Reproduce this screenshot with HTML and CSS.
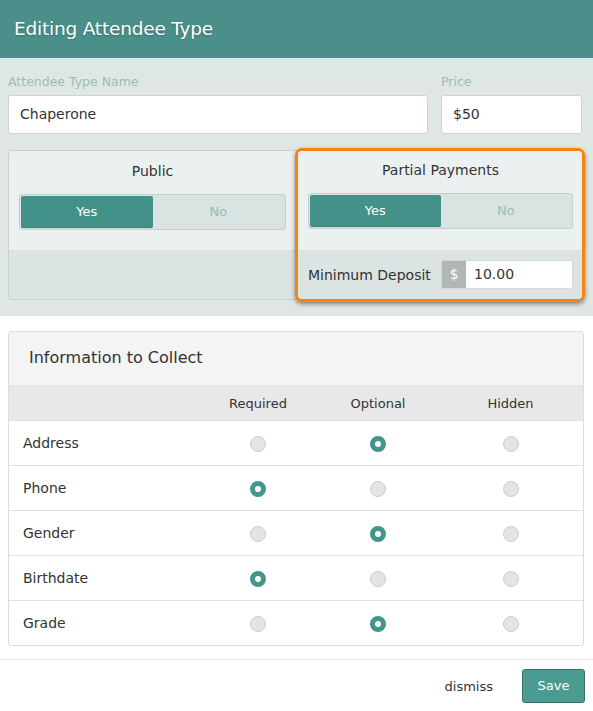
FILE: index.html
```html
<!DOCTYPE html>
<html>
<head>
<meta charset="utf-8">
<link rel="stylesheet" href="styles.css">
</head>
<body>
<div class="modal">
  <div class="header">Editing Attendee Type</div>
  <div class="top">
    <div class="fields">
      <div class="field name">
        <div class="label">Attendee Type Name</div>
        <div class="input">Chaperone</div>
      </div>
      <div class="field price">
        <div class="label">Price</div>
        <div class="input">$50</div>
      </div>
    </div>
    <div class="panels">
      <div class="panel">
        <div class="panel-top">
          <div class="panel-title">Public</div>
          <div class="toggle"><span class="on">Yes</span><span class="off">No</span></div>
        </div>
        <div class="panel-bottom"></div>
      </div>
      <div class="panel highlight">
        <div class="panel-top">
          <div class="panel-title">Partial Payments</div>
          <div class="toggle"><span class="on">Yes</span><span class="off">No</span></div>
        </div>
        <div class="panel-bottom deposit">
          <span class="deposit-label">Minimum Deposit</span>
          <div class="input-group"><span class="addon">$</span><span class="value">10.00</span></div>
        </div>
      </div>
    </div>
  </div>
  <div class="info">
    <div class="card">
      <div class="card-title">Information to Collect</div>
      <div class="row head"><span></span><span>Required</span><span>Optional</span><span>Hidden</span></div>
      <div class="row"><span class="name">Address</span><span><i class="radio"></i></span><span><i class="radio checked"></i></span><span><i class="radio"></i></span></div>
      <div class="row"><span class="name">Phone</span><span><i class="radio checked"></i></span><span><i class="radio"></i></span><span><i class="radio"></i></span></div>
      <div class="row"><span class="name">Gender</span><span><i class="radio"></i></span><span><i class="radio checked"></i></span><span><i class="radio"></i></span></div>
      <div class="row"><span class="name">Birthdate</span><span><i class="radio checked"></i></span><span><i class="radio"></i></span><span><i class="radio"></i></span></div>
      <div class="row"><span class="name">Grade</span><span><i class="radio"></i></span><span><i class="radio checked"></i></span><span><i class="radio"></i></span></div>
    </div>
  </div>
  <div class="footer">
    <span class="dismiss">dismiss</span>
    <span class="save">Save</span>
  </div>
</div>
</body>
</html>
```
FILE: styles.css
```css
* { box-sizing: border-box; }
html, body { margin: 0; padding: 0; background: #fff; }
body { font-family: "DejaVu Sans", "Liberation Sans", sans-serif; color: #333; font-size: 14px; }
.modal { width: 593px; }
.header {
  background: #4a8f89; color: #fff; height: 58px; font-size: 18.5px; letter-spacing: -0.2px;
  padding: 18px 0 0 14px; text-shadow: 0 1px 2px rgba(0,0,0,.25);
}
.top { background: #dfe7e5; padding: 16px 11px 14px 8px; }
.fields { display: flex; gap: 13px; }
.field .label { color: #9dbcb5; font-size: 12.5px; height: 21px; line-height: 16px; }
.field.name { flex: 1; }
.field.price { width: 141px; }
.input {
  background: #fff; border: 1px solid #cfd4d3; border-radius: 3px; height: 39px;
  padding: 0 11px; line-height: 37px; font-size: 14px; color: #333;
}
.panels { display: flex; margin-top: 16px; margin-right: -3px; }
.panel {
  flex: 0 0 289px; border: 1px solid #c6d2cf; border-radius: 3px; overflow: hidden;
  display: flex; flex-direction: column; height: 150px;
}
.panel.highlight {
  flex: 0 0 290px; margin-left: -2px; border: 3px solid #f7820c; border-radius: 7px;
  box-shadow: 0 2px 4px rgba(0,0,0,.45); margin-top: -2px; height: 154px; position: relative;
}
.panel-top { background: #ebf1f0; padding: 11px 10px 20px 10px; height: 99px; }
.panel.highlight .panel-top { padding: 10px 9px 20px 10px; }
.panel-title { text-align: center; font-size: 14px; height: 32px; line-height: 18px; }
.toggle {
  display: flex; border: 1px solid #c3d1ce; border-radius: 3px; background: #d9e4e2;
  height: 36px; padding: 1px;
}
.toggle span { flex: 1; text-align: center; line-height: 32px; font-size: 13px; }
.toggle .on { background: #42928a; color: #fff; border-radius: 2px; box-shadow: inset 0 -1px 0 rgba(0,0,0,.15); }
.toggle .off { color: #8fc1b8; }
.panel-bottom { background: #dbe4e2; flex: 1; }
.deposit { display: flex; align-items: center; padding: 0 9px 0 10px; justify-content: space-between; }
.deposit-label { font-size: 14px; }
.input-group {
  display: flex; width: 132px; height: 29px; border: 1px solid #d3d8d7; border-radius: 2px;
  background: #fff; overflow: hidden;
}
.addon { width: 24px; background: #b0b8b6; color: #fff; text-align: center; line-height: 27px; font-size: 14px; }
.value { padding-left: 8px; line-height: 27px; font-size: 14px; }
.info { padding: 15px 9px 13px 8px; }
.card { border: 1px solid #dcdcdc; border-radius: 3px; overflow: hidden; }
.card-title {
  background: #f4f4f4; height: 53px; line-height: 52px; padding-left: 20px; font-size: 16px;
}
.row {
  display: grid; grid-template-columns: 189px 120px 120px 1fr; height: 45px;
  align-items: center; border-top: 1px solid #e0e0e0;
}
.row.head { background: #e8e8e8; height: 35px; font-size: 13px; border-top: 1px solid #e6e6e6; }
.row span { text-align: center; }
.row .name { text-align: left; padding-left: 14px; font-size: 14px; }
.radio {
  display: inline-block; width: 16px; height: 16px; border-radius: 50%;
  background: #e4e4e4; border: 1px solid #cccccc; vertical-align: middle;
}
.radio.checked { background: #fff; border: 5px solid #42968b; }
.footer {
  border-top: 1px solid #e5e5e5; display: flex; justify-content: flex-end; align-items: center;
  height: 53px; padding-right: 8px; gap: 29px;
}
.dismiss { font-size: 13px; color: #333; }
.save {
  background: #4a9b91; color: #fff; border: 1px solid #3a7069; border-radius: 3px;
  width: 63px; height: 34px; line-height: 32px; text-align: center; font-size: 13px;
}
```
